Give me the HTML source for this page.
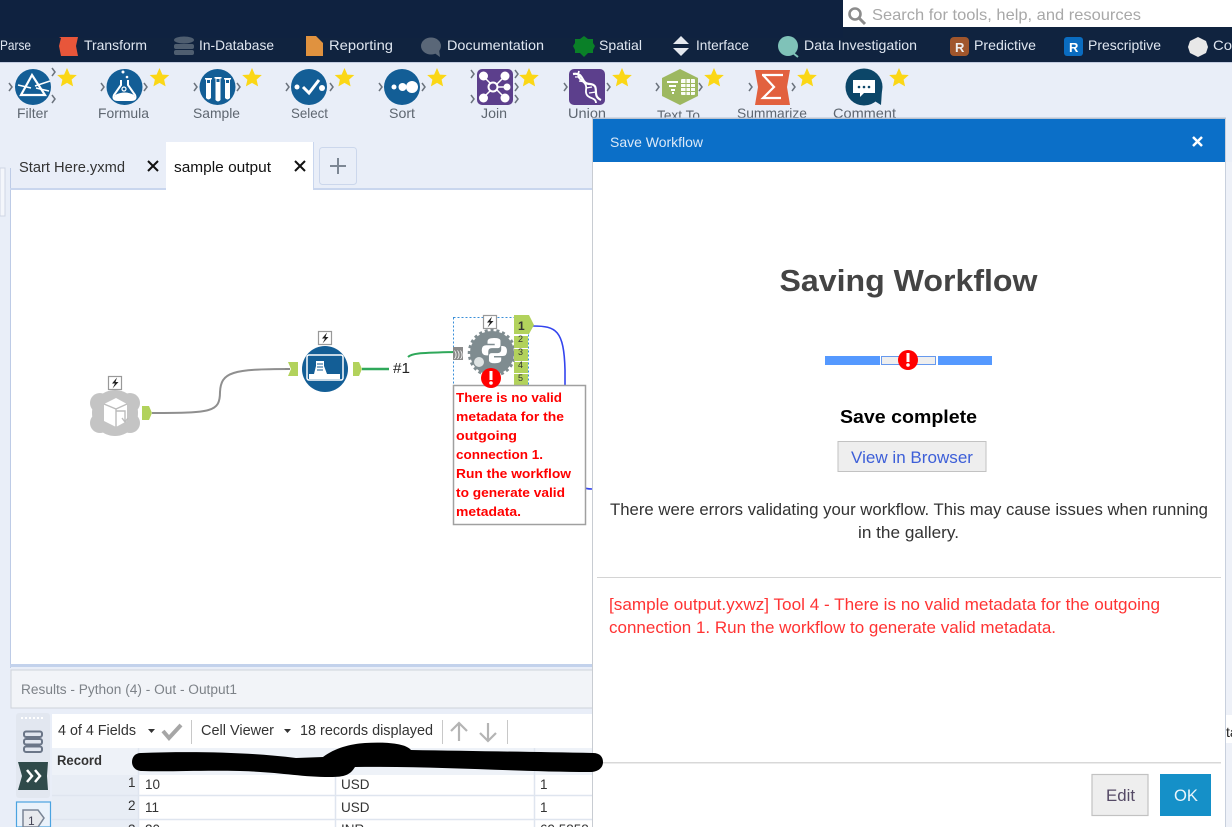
<!DOCTYPE html>
<html><head><meta charset="utf-8"><style>
html,body{margin:0;padding:0;background:#e9eef8;overflow:hidden}
svg{display:block;font-family:"Liberation Sans",sans-serif;filter:blur(.35px)}
</style></head><body>
<svg width="1232" height="827" viewBox="0 0 1232 827" xmlns="http://www.w3.org/2000/svg">
<defs>
<polygon id="star" points="0,-10 2.9,-3.4 9.8,-3 4.6,1.6 6.1,8.4 0,4.9 -6.1,8.4 -4.6,1.6 -9.8,-3 -2.9,-3.4" fill="#fbd716"/>
<path id="chev" d="M0,-4 L3,0 L0,4" fill="none" stroke="#6b737d" stroke-width="1.500"/>
<g id="bolt"><rect x="0.500" y="0.500" width="13" height="13" fill="#fff" stroke="#999" stroke-width="1.200"/><path d="M9,1.500 L4,7.500 H7 L4.500,12.500 L10.500,6 H7.500 Z" fill="#222"/></g>
</defs>
<rect width="1232" height="827" fill="#e9eef8"/>
<rect width="1232" height="62" fill="#10233f"/>
<rect x="0" y="0" width="843" height="38" fill="#0f2240"/>
<rect x="843" y="0" width="389" height="27" fill="#fff"/>
<circle cx="855" cy="14" r="5.500" fill="none" stroke="#8c8c8c" stroke-width="2.600"/><path d="M859,18 L865,24" stroke="#8c8c8c" stroke-width="3"/>
<text x="872" y="20" font-size="16" fill="#a8a8a8" textLength="269" lengthAdjust="spacingAndGlyphs">Search for tools, help, and resources</text>

<g fill="#dfe6f0" font-size="14">
<text x="0" y="50" textLength="31" lengthAdjust="spacingAndGlyphs">Parse</text>
<text x="84" y="50" textLength="63" lengthAdjust="spacingAndGlyphs">Transform</text>
<text x="199" y="50" textLength="75" lengthAdjust="spacingAndGlyphs">In-Database</text>
<text x="329" y="50" textLength="64" lengthAdjust="spacingAndGlyphs">Reporting</text>
<text x="447" y="50" textLength="97" lengthAdjust="spacingAndGlyphs">Documentation</text>
<text x="599" y="50" textLength="43" lengthAdjust="spacingAndGlyphs">Spatial</text>
<text x="696" y="50" textLength="53" lengthAdjust="spacingAndGlyphs">Interface</text>
<text x="804" y="50" textLength="113" lengthAdjust="spacingAndGlyphs">Data Investigation</text>
<text x="974" y="50" textLength="62" lengthAdjust="spacingAndGlyphs">Predictive</text>
<text x="1088" y="50" textLength="73" lengthAdjust="spacingAndGlyphs">Prescriptive</text>
<text x="1213" y="50" textLength="19" lengthAdjust="spacingAndGlyphs">Co</text>
</g>
<!-- category icons -->
<path d="M59,37 H78 L76,46 L78,56 L61,56 L59,46 L61,38 Z" fill="#e8563a"/>
<g fill="#4f5e70"><ellipse cx="184" cy="40" rx="10" ry="3.500"/><rect x="174" y="44" width="20" height="5" rx="2"/><rect x="174" y="50" width="20" height="5" rx="2"/></g>
<path d="M306,36 H316 L323,43 V56 H306 Z" fill="#e0923f"/>
<ellipse cx="431" cy="46" rx="10" ry="8.500" fill="#5a6778"/><path d="M433,52 L440,57 L439,49Z" fill="#5a6778"/>
<polygon points="584,36 588,39 593,39 593,43 595,46 593,50 593,53 588,53 584,57 580,53 575,53 575,50 573,46 575,43 575,39 580,39" fill="#0a8028"/>
<path d="M681,36 L689,44 H673 Z M681,56 L689,48 H673 Z" fill="#e4e8ee"/>
<circle cx="788" cy="46" r="10" fill="#7fc2b8"/><path d="M793,53 L798,57" stroke="#7fc2b8" stroke-width="2"/>
<rect x="950" y="37" width="19" height="19" rx="4" fill="#a0562c"/><text x="955" y="52" font-size="13" font-weight="bold" fill="#eee">R</text>
<rect x="1064" y="37" width="19" height="19" rx="3" fill="#0a6cc0"/><text x="1069" y="52" font-size="13" font-weight="bold" fill="#fff">R</text>
<polygon points="1198,37 1206,41 1208,47 1206,53 1198,57 1190,53 1188,47 1190,41" fill="#e8e8e8"/>

<rect x="0" y="62" width="1232" height="1" fill="#c3cce0"/>
<!-- Toolbar icons -->
<g fill="#135e96">
<circle cx="33" cy="87" r="18"/><circle cx="124.500" cy="87" r="18"/><circle cx="217.500" cy="87" r="18"/><circle cx="309" cy="87" r="18"/><circle cx="402" cy="87" r="18"/>
</g>
<!-- filter -->
<g fill="none" stroke="#fff" stroke-width="2.200">
<path d="M32,75 L21,95 H45 Z"/><path d="M18,85 L31,88 M35,86 L50,81 M36,88 L49,91" stroke-width="1.500"/>
</g>
<!-- formula -->
<path d="M121,80 V85 L114,95 Q112,100 118,100 H131 Q137,100 135,95 L128,85 V80" fill="none" stroke="#fff" stroke-width="2"/>
<path d="M115,95 Q125,90 134,95 L135,99 H114 Z" fill="#fff"/>
<circle cx="124" cy="89" r="2" fill="none" stroke="#fff" stroke-width="1.200"/><circle cx="123" cy="72" r="1.500" fill="#fff"/><circle cx="127" cy="77" r="1.300" fill="#fff"/>
<!-- sample -->
<g fill="#fff"><path d="M205,78 H212 V79.500 H211 V98 Q208.500,101 206,98 V79.500 H205 Z"/><path d="M214.500,77 H221.500 V78.500 H220.500 V100 Q218,103 215.500,100 V78.500 H214.500 Z"/><path d="M224,78 H231 V79.500 H230 V98 Q227.500,101 225,98 V79.500 H224 Z"/></g>
<g fill="#135e96"><rect x="207" y="80" width="3" height="3"/><rect x="216.500" y="79" width="3" height="3"/><rect x="226" y="80" width="3" height="3"/></g>
<!-- select -->
<path d="M303,87 L309,93 L319,80" fill="none" stroke="#fff" stroke-width="3"/>
<g fill="#fff"><circle cx="297" cy="87" r="2.500"/><circle cx="322" cy="88" r="3"/><circle cx="394" cy="87" r="2.500"/><circle cx="402.500" cy="87" r="4"/><circle cx="412" cy="87" r="6"/></g>
<!-- join -->
<rect x="477" y="69" width="36" height="36" rx="5" fill="#5c3f8c"/>
<g stroke="#fff" stroke-width="1.500"><path d="M483,76 L505,98 M505,76 L483,98 M493,87 H507"/></g>
<g fill="#fff"><circle cx="483.500" cy="76" r="4.500"/><circle cx="505" cy="76" r="4.500"/><circle cx="483.500" cy="98" r="4.500"/><circle cx="505" cy="98" r="4.500"/><circle cx="507" cy="87" r="3.500"/></g><circle cx="493" cy="87" r="4.500" fill="#5c3f8c" stroke="#fff" stroke-width="2"/>
<!-- union -->
<rect x="569" y="69" width="36" height="36" rx="5" fill="#5c3f8c"/>
<path d="M573,74 C585,72 580,84 590,84 C601,85 591,96 601,100" fill="none" stroke="#fff" stroke-width="2.200"/>
<path d="M579,71 C575,82 588,79 586,90 C585,100 596,96 596,103" fill="none" stroke="#fff" stroke-width="1.800"/>
<path d="M575,77 L581,77 M579,81 L585,82 M586,88 L592,87 M589,93 L596,92" stroke="#fff" stroke-width="1.200"/>
<!-- text to -->
<polygon points="680,69 698,78 698,96 680,105 662,96 662,78" fill="#9db860"/>
<rect x="681" y="79" width="14" height="16" rx="1" fill="#fff" opacity=".95"/><path d="M667,82 H678 M669,86 H676 M671,90 H675 M672,93 H674" stroke="#fff" stroke-width="2"/>
<path d="M681,83.500 H695 M681,87.500 H695 M681,91.500 H695 M686,79 V95 M690.500,79 V95" stroke="#9db860"/>
<!-- summarize -->
<path d="M755,70 H790 L787,87 L790,105 H755 L758,87 Z" fill="#e2613f"/>
<path d="M762,75 H783 M781,98 H763 L774,87 L763,75" fill="none" stroke="#fff" stroke-width="2.200"/>
<!-- comment -->
<circle cx="864" cy="87" r="18.500" fill="#0c4668"/><path d="M873,100 L881,105 L882,90Z" fill="#0c4668"/>
<path d="M853,80 H875 V93 H864 L860,97 V93 H853 Z" fill="#fff"/>
<g fill="#0c4668"><circle cx="859" cy="87" r="1.300"/><circle cx="864" cy="87" r="1.300"/><circle cx="869" cy="87" r="1.300"/></g>
<!-- chevrons -->
<use href="#chev" x="9" y="87"/><use href="#chev" x="52" y="72"/><use href="#chev" x="52" y="99" /><use href="#chev" x="101" y="87"/><use href="#chev" x="144" y="87"/><use href="#chev" x="194" y="87"/><use href="#chev" x="237" y="87"/><use href="#chev" x="286" y="87"/><use href="#chev" x="330" y="87"/><use href="#chev" x="379" y="87"/><use href="#chev" x="422" y="87"/>
<use href="#chev" x="471" y="74"/><use href="#chev" x="471" y="99"/><use href="#chev" x="515" y="74"/><use href="#chev" x="515" y="87"/><use href="#chev" x="515" y="99"/><use href="#chev" x="564" y="87"/><use href="#chev" x="607" y="87"/><use href="#chev" x="656" y="87"/><use href="#chev" x="699" y="87"/><use href="#chev" x="749" y="87"/><use href="#chev" x="792" y="87"/>
<!-- stars -->
<use href="#star" x="67" y="78"/><use href="#star" x="159.500" y="78"/><use href="#star" x="252" y="78"/><use href="#star" x="344.500" y="78"/><use href="#star" x="437" y="78"/><use href="#star" x="529" y="78"/><use href="#star" x="622" y="78"/><use href="#star" x="714" y="78"/><use href="#star" x="807" y="78"/><use href="#star" x="899" y="78"/>
<g fill="#5e6670" font-size="14">
<text x="17" y="118" textLength="31" lengthAdjust="spacingAndGlyphs">Filter</text>
<text x="98" y="118" textLength="51" lengthAdjust="spacingAndGlyphs">Formula</text>
<text x="193" y="118" textLength="47" lengthAdjust="spacingAndGlyphs">Sample</text>
<text x="291" y="118" textLength="37" lengthAdjust="spacingAndGlyphs">Select</text>
<text x="389" y="118" textLength="26" lengthAdjust="spacingAndGlyphs">Sort</text>
<text x="481" y="118" textLength="26" lengthAdjust="spacingAndGlyphs">Join</text>
<text x="568" y="118" textLength="38" lengthAdjust="spacingAndGlyphs">Union</text>
<text x="657" y="120" textLength="43" lengthAdjust="spacingAndGlyphs">Text To</text>
<text x="737" y="118" textLength="70" lengthAdjust="spacingAndGlyphs">Summarize</text>
<text x="833" y="118" textLength="63" lengthAdjust="spacingAndGlyphs">Comment</text>
</g>
<!-- tabs -->
<rect x="0" y="168" width="5" height="48" fill="#f4f6fb" stroke="#cfd6e4"/>
<rect x="10" y="168" width="1" height="500" fill="#bdcbe6"/>
<rect x="11" y="142" width="155" height="46" fill="#e9eef8"/>
<rect x="10" y="188" width="583" height="2" fill="#c9d6ee"/>
<rect x="166" y="142" width="147" height="48" fill="#fff"/>
<rect x="313" y="142" width="1" height="48" fill="#c9d6ee"/>
<text x="19" y="172" font-size="15" fill="#333" textLength="106" lengthAdjust="spacingAndGlyphs">Start Here.yxmd</text>
<text x="174" y="172" font-size="15" fill="#111" textLength="97" lengthAdjust="spacingAndGlyphs">sample output</text>
<path d="M148,161 L158,171 M158,161 L148,171 M295,161 L305,171 M305,161 L295,171" stroke="#111" stroke-width="2"/>
<rect x="319.500" y="147.500" width="37" height="37" rx="3" fill="#e9eef8" stroke="#ccd7ec"/>
<path d="M338,158 V174 M330,166 H346" stroke="#7d8794" stroke-width="2"/>
<!-- canvas -->
<rect x="11" y="190" width="582" height="474" fill="#fff"/>
<rect x="10" y="664" width="583" height="3" fill="#c3d2ec"/>
<!-- wires -->
<path d="M152,413 C212,413 220,412 220,392 C221,372 232,369 290,369" fill="none" stroke="#8f8f8f" stroke-width="2"/>
<path d="M362,369 H389" stroke="#2fa85a" stroke-width="2.500"/>
<path d="M408,357 C412,353 420,353 454,352" fill="none" stroke="#2fa85a" stroke-width="2"/>
<path d="M533,326 C556,326 564,330 565,370 L565,440 C565,480 578,489 592,489" fill="none" stroke="#3344ee" stroke-width="1.600"/>
<text x="393" y="373" font-size="15" fill="#222" textLength="17" lengthAdjust="spacingAndGlyphs">#1</text>
<!-- left node -->
<g fill="#c4c4c4"><circle cx="115" cy="413" r="23"/><circle cx="100" cy="403" r="10"/><circle cx="130" cy="403" r="10"/><circle cx="100" cy="423" r="10"/><circle cx="130" cy="423" r="10"/><circle cx="115" cy="401" r="9"/><circle cx="115" cy="426" r="9"/></g>
<path d="M104,404 L116,398 L127,404 V421 L116,427 L104,421 Z" fill="#fff"/><path d="M104,404 L116,409 L127,404 M116,409 V427 M116,411 H125 V421 M122,418 L125,422 L128,418" stroke="#bcbcbc" stroke-width="1.400" fill="none"/>
<path d="M142,406 H149 L152,413 L149,420 H142 Z" fill="#b2d25c"/>
<use href="#bolt" x="108" y="376"/>
<!-- middle node -->
<circle cx="325" cy="369" r="23" fill="#135e96"/>
<path d="M288,362 H298 V376 H288 L291,369 Z" fill="#b2d25c"/>
<path d="M285,369 H290" stroke="#888" stroke-width="1.500"/>
<rect x="307" y="355" width="36" height="25" rx="2" fill="none" stroke="#fff" stroke-width="1.500"/>
<path d="M316,361 H324 V366 L327,374 H340 V379 H309 V374 H314 L316,366 Z" fill="#fff"/>
<path d="M317,364 H323 M317,367 H323 M317,370 H323" stroke="#135e96" stroke-width="1"/>
<path d="M353,362 H359 L362,369 L359,376 H353 Z" fill="#b2d25c"/>
<use href="#bolt" x="318" y="331"/>
<!-- python node -->
<rect x="453.500" y="317.500" width="75" height="68" fill="none" stroke="#3a8fd8" stroke-dasharray="2 2"/>
<circle cx="492" cy="353" r="22" fill="#7f8c90"/>
<circle cx="492" cy="353" r="22.500" fill="none" stroke="#7f8c90" stroke-width="3.500" stroke-dasharray="3 2.800"/>
<g transform="translate(494 351) scale(.72) translate(-492 -353)">
<path d="M492,335 Q483,335 483,340 V343 H493 V345 H481 Q475,345 475,352 Q475,359 481,359 H484 V354 Q484,349 489,349 H497 Q501,349 501,345 V339 Q501,335 492,335 Z" fill="#fff"/>
<path d="M493,370 Q502,370 502,365 V362 H492 V360 H504 Q510,360 510,353 Q510,346 504,346 H502 V351 Q502,356 497,356 H489 Q485,356 485,360 V366 Q485,370 493,370 Z" fill="#fff"/>
</g>
<circle cx="479" cy="362" r="5" fill="#dfe4e4"/>
<rect x="453" y="347" width="10" height="13" fill="#8a8a8a"/><text x="454" y="357" font-size="9" fill="#fff">)))</text>
<g fill="#b2d25c"><rect x="514" y="336" width="14" height="12"/><rect x="514" y="349" width="14" height="12"/><rect x="514" y="362" width="14" height="11"/><rect x="514" y="374" width="14" height="11"/></g>
<path d="M514,315 H529 L534,325 L529,334 H514 Z" fill="#b2d25c"/>
<text x="518" y="330" font-size="12" font-weight="bold" fill="#333">1</text>
<g font-size="9" fill="#333"><text x="518" y="342">2</text><text x="518" y="355">3</text><text x="518" y="368">4</text><text x="518" y="381">5</text></g>
<use href="#bolt" x="483" y="315"/>
<rect x="453.500" y="385.500" width="132" height="139" fill="#fff" stroke="#a0a0a0" stroke-width="1.500"/>
<circle cx="491" cy="378" r="10" fill="#f00"/><rect x="489.500" y="371" width="3" height="9" fill="#fff"/><circle cx="491" cy="383" r="1.800" fill="#fff"/>
<g font-size="13" font-weight="bold" fill="#f00">
<text x="456" y="402" textLength="106" lengthAdjust="spacingAndGlyphs">There is no valid</text>
<text x="456" y="421" textLength="108" lengthAdjust="spacingAndGlyphs">metadata for the</text>
<text x="456" y="440" textLength="61" lengthAdjust="spacingAndGlyphs">outgoing</text>
<text x="456" y="459" textLength="87" lengthAdjust="spacingAndGlyphs">connection 1.</text>
<text x="456" y="478" textLength="115" lengthAdjust="spacingAndGlyphs">Run the workflow</text>
<text x="456" y="497" textLength="109" lengthAdjust="spacingAndGlyphs">to generate valid</text>
<text x="456" y="516" textLength="65" lengthAdjust="spacingAndGlyphs">metadata.</text>
</g>
<!-- results -->
<rect x="11" y="670" width="582" height="38" fill="#f2f4f8" stroke="#cfd3da"/>
<text x="21" y="694" font-size="13.500" fill="#7d8288" textLength="216" lengthAdjust="spacingAndGlyphs">Results - Python (4) - Out - Output1</text>
<rect x="52" y="714" width="541" height="113" fill="#fff"/>
<rect x="16" y="713" width="34" height="85" rx="3" fill="#e2e7f0"/>
<text x="58" y="735" font-size="14.500" fill="#333" textLength="78" lengthAdjust="spacingAndGlyphs">4 of 4 Fields</text>
<path d="M148,729 H155 L151.500,733 Z M284,729 H291 L287.500,733 Z" fill="#333"/>
<path d="M163,731 L169,738 L181,725" fill="none" stroke="#a6a6a6" stroke-width="4"/>
<rect x="191" y="720" width="1" height="24" fill="#c8c8c8"/><rect x="442" y="720" width="1" height="24" fill="#c8c8c8"/><rect x="507" y="720" width="1" height="24" fill="#c8c8c8"/>
<text x="201" y="735" font-size="14.500" fill="#333" textLength="73" lengthAdjust="spacingAndGlyphs">Cell Viewer</text>
<text x="300" y="735" font-size="14.500" fill="#333" textLength="133" lengthAdjust="spacingAndGlyphs">18 records displayed</text>
<path d="M459,741 V723 M451,731 L459,723 L467,731 M488,723 V741 M480,733 L488,741 L496,733" fill="none" stroke="#b4b4b4" stroke-width="2.200"/>
<path d="M21,718 H44" stroke="#fff" stroke-dasharray="2 2" stroke-width="2"/>
<rect x="24" y="731.500" width="18" height="5.500" rx="2" fill="none" stroke="#6b7688" stroke-width="2"/><rect x="24" y="739" width="18" height="5.500" rx="2" fill="none" stroke="#6b7688" stroke-width="2"/>
<rect x="24" y="746.500" width="18" height="5.500" rx="2" fill="none" stroke="#6b7688" stroke-width="2"/>
<path d="M18,762 H48 L47,776 L48,790 H18 L22,776 Z" fill="#2f4a4a"/>
<path d="M27,770 L32,776 L27,782 M35,770 L40,776 L35,782" fill="none" stroke="#fff" stroke-width="2.500"/>
<rect x="16.500" y="802" width="34" height="25" fill="#eaf2fb" stroke="#4aa3e0" stroke-width="1.200"/>
<path d="M23,810 H38 L44,818 L38,827 H23 Z" fill="#e8eaee" stroke="#7a8596" stroke-width="1.500"/>
<text x="28" y="825" font-size="12" fill="#445">1</text>
<rect x="52" y="748" width="541" height="27" fill="#eef2f8"/>
<text x="57" y="765" font-size="13.500" font-weight="bold" fill="#333" textLength="45" lengthAdjust="spacingAndGlyphs">Record</text>
<rect x="52" y="775" width="86" height="52" fill="#e8edf5"/>
<rect x="140" y="775" width="453" height="52" fill="#fff"/>
<path d="M52,795.500 H593 M52,819.500 H593 M138.500,748 V827 M335.500,775 V827 M534.500,748 V827" stroke="#dfe5ef" stroke-width="1.500"/>
<g font-size="13.500" fill="#333">
<text x="128" y="787">1</text><text x="128" y="810">2</text><text x="128" y="834">3</text>
<text x="145" y="789">10</text><text x="145" y="812">11</text><text x="145" y="834">20</text>
<text x="341" y="789">USD</text><text x="341" y="812">USD</text><text x="341" y="834">INR</text>
<text x="540" y="789">1</text><text x="540" y="812">1</text><text x="540" y="834">69.5858</text>
</g>
<!-- right strip -->
<rect x="1225" y="162" width="7" height="665" fill="#eef1f8"/>
<rect x="1226" y="715" width="6" height="28" fill="#fff"/>
<text x="1226" y="737" font-size="14" fill="#222">ta</text>
<!-- dialog -->
<rect x="592" y="119" width="633" height="708" fill="#fff"/>
<rect x="592" y="119" width="1" height="708" fill="#c8ccd2"/>
<rect x="1225" y="119" width="1" height="708" fill="#c8d0dd"/>
<rect x="592" y="117.500" width="634" height="1.500" fill="#b9c2d0"/>
<rect x="593" y="119" width="632" height="43" fill="#0b6fc8"/>
<text x="610" y="147" font-size="14" fill="#dce9f7" textLength="93" lengthAdjust="spacingAndGlyphs">Save Workflow</text>
<path d="M1193,137 L1202,146 M1202,137 L1193,146" stroke="#fff" stroke-width="2.500"/>
<text x="908.500" y="291" font-size="31" font-weight="bold" fill="#444" text-anchor="middle" textLength="258" lengthAdjust="spacingAndGlyphs">Saving Workflow</text>
<rect x="825" y="356" width="55" height="9" fill="#5599ff"/>
<rect x="881.500" y="356.500" width="54" height="8" fill="#eeeeee" stroke="#6699ee"/>
<rect x="938" y="356" width="54" height="9" fill="#5599ff"/>
<circle cx="908" cy="360" r="10" fill="#f00"/><rect x="906.500" y="353" width="3" height="9" fill="#fff"/><circle cx="908" cy="365" r="1.800" fill="#fff"/>
<text x="908.500" y="423" font-size="18" font-weight="bold" fill="#000" text-anchor="middle" textLength="137" lengthAdjust="spacingAndGlyphs">Save complete</text>
<rect x="838" y="441.500" width="148" height="30" fill="#eeeeee" stroke="#c2c2c2"/>
<text x="851" y="463" font-size="16.500" fill="#3d5fd8" textLength="122" lengthAdjust="spacingAndGlyphs">View in Browser</text>
<text x="610" y="515" font-size="16.500" fill="#333" textLength="598" lengthAdjust="spacingAndGlyphs">There were errors validating your workflow. This may cause issues when running</text>
<text x="858" y="538" font-size="16.500" fill="#333" textLength="101" lengthAdjust="spacingAndGlyphs">in the gallery.</text>
<rect x="597" y="577" width="624" height="1" fill="#d4d4d4"/>
<text x="609" y="610" font-size="16.500" fill="#f33" textLength="551" lengthAdjust="spacingAndGlyphs">[sample output.yxwz] Tool 4 - There is no valid metadata for the outgoing</text>
<text x="609" y="633" font-size="16.500" fill="#f33" textLength="447" lengthAdjust="spacingAndGlyphs">connection 1. Run the workflow to generate valid metadata.</text>
<rect x="597" y="762" width="624" height="1.500" fill="#d8d8d8"/>
<rect x="1092" y="774.500" width="56" height="41" fill="#eeeeee" stroke="#c2c2c2" stroke-width="1.200"/>
<text x="1106" y="801" font-size="16.500" fill="#554a66" textLength="29" lengthAdjust="spacingAndGlyphs">Edit</text>
<rect x="1160" y="774" width="51" height="42" fill="#1590c8"/>
<text x="1174" y="801" font-size="16.500" fill="#eaf5fb" textLength="24" lengthAdjust="spacingAndGlyphs">OK</text>
<!-- scribble, over the dialog edge -->
<path d="M141,753 C190,751 250,752 296,758 L323,757 C335,748 350,744 365,743 C385,742 405,743 411,750 C470,751 540,752 593,753 C600,753 603,757 603,762 C603,768 598,772 590,772 C520,772 440,766 355,767 C350,775 345,777 330,777 C300,777 280,772 240,771 C200,770 170,772 142,771 C135,771 132,766 132,762 C132,757 135,753 141,753 Z" fill="#000"/>
</svg>
</body></html>
